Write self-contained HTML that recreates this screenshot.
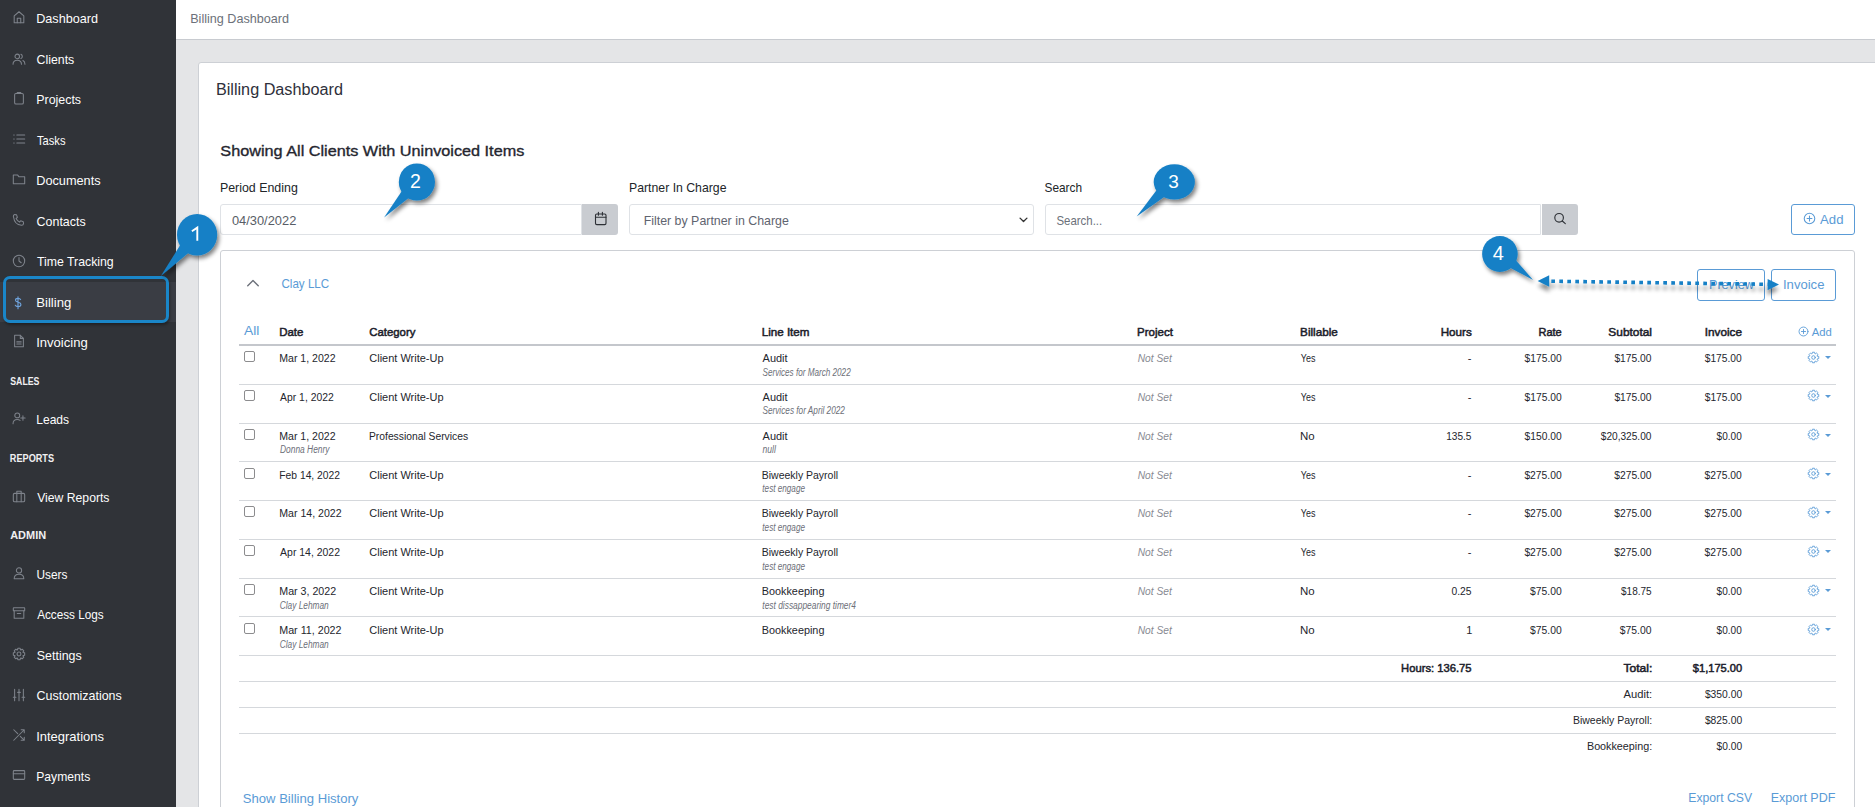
<!DOCTYPE html>
<html><head><meta charset="utf-8">
<style>
*{box-sizing:border-box;margin:0;padding:0}
html,body{width:1875px;height:807px;overflow:hidden;background:#e4e5e7;font-family:"Liberation Sans",sans-serif;position:relative}
.a{position:absolute}
svg text{font-family:"Liberation Sans",sans-serif}
</style></head><body>
<div class="a" style="left:0px;top:0px;width:176px;height:807px;background:#303338"></div>
<div class="a" style="left:0px;top:282px;width:176px;height:40px;background:#3a3d44"></div>
<div class="a" style="left:176px;top:0px;width:1699px;height:40px;background:#fff;border-bottom:1px solid #c8cbd0"></div>
<div class="a" style="left:198px;top:62px;width:1720px;height:800px;background:#fff;border:1px solid #cdd0d5;border-radius:3px"></div>
<div class="a" style="left:220px;top:204px;width:362px;height:31px;border:1px solid #dfe2e6;border-radius:3px 0 0 3px;background:#fff"></div>
<div class="a" style="left:582px;top:204px;width:36px;height:31px;background:#c9ccd1;border-radius:0 3px 3px 0"></div>
<div class="a" style="left:629px;top:204px;width:405px;height:31px;border:1px solid #dfe2e6;border-radius:3px;background:#fff"></div>
<div class="a" style="left:1045px;top:204px;width:496px;height:31px;border:1px solid #dfe2e6;border-radius:3px 0 0 3px;background:#fff"></div>
<div class="a" style="left:1542px;top:204px;width:36px;height:31px;background:#c9ccd1;border-radius:0 3px 3px 0"></div>
<div class="a" style="left:1791px;top:204px;width:64px;height:31px;border:1px solid #5a9bd6;border-radius:3px;background:#fff"></div>
<div class="a" style="left:220px;top:250px;width:1635px;height:620px;border:1px solid #cdd0d5;border-radius:3px"></div>
<div class="a" style="left:1697px;top:269px;width:68px;height:32px;border:1px solid #5a9bd6;border-radius:3px"></div>
<div class="a" style="left:1771px;top:269px;width:65px;height:32px;border:1px solid #5a9bd6;border-radius:3px"></div>
<div class="a" style="left:239px;top:344px;width:1597px;height:2px;background:#c4c7cc"></div>
<div class="a" style="left:239px;top:384px;width:1597px;height:1px;background:#d5d8dc"></div>
<div class="a" style="left:239px;top:423px;width:1597px;height:1px;background:#d5d8dc"></div>
<div class="a" style="left:239px;top:461px;width:1597px;height:1px;background:#d5d8dc"></div>
<div class="a" style="left:239px;top:500px;width:1597px;height:1px;background:#d5d8dc"></div>
<div class="a" style="left:239px;top:539px;width:1597px;height:1px;background:#d5d8dc"></div>
<div class="a" style="left:239px;top:578px;width:1597px;height:1px;background:#d5d8dc"></div>
<div class="a" style="left:239px;top:616px;width:1597px;height:1px;background:#d5d8dc"></div>
<div class="a" style="left:239px;top:655px;width:1597px;height:1px;background:#d5d8dc"></div>
<div class="a" style="left:239px;top:681px;width:1597px;height:1px;background:#d5d8dc"></div>
<div class="a" style="left:239px;top:707px;width:1597px;height:1px;background:#d5d8dc"></div>
<div class="a" style="left:239px;top:733px;width:1597px;height:1px;background:#d5d8dc"></div>
<div class="a" style="left:244px;top:351px;width:11px;height:11px;border:1px solid #8c8c8e;border-radius:2px;background:#fff"></div>
<div class="a" style="left:244px;top:390px;width:11px;height:11px;border:1px solid #8c8c8e;border-radius:2px;background:#fff"></div>
<div class="a" style="left:244px;top:429px;width:11px;height:11px;border:1px solid #8c8c8e;border-radius:2px;background:#fff"></div>
<div class="a" style="left:244px;top:468px;width:11px;height:11px;border:1px solid #8c8c8e;border-radius:2px;background:#fff"></div>
<div class="a" style="left:244px;top:506px;width:11px;height:11px;border:1px solid #8c8c8e;border-radius:2px;background:#fff"></div>
<div class="a" style="left:244px;top:545px;width:11px;height:11px;border:1px solid #8c8c8e;border-radius:2px;background:#fff"></div>
<div class="a" style="left:244px;top:584px;width:11px;height:11px;border:1px solid #8c8c8e;border-radius:2px;background:#fff"></div>
<div class="a" style="left:244px;top:623px;width:11px;height:11px;border:1px solid #8c8c8e;border-radius:2px;background:#fff"></div>
<svg class="a" style="left:12px;top:10px" width="14" height="14" viewBox="0 0 16 16" fill="none" stroke="#7e838b" stroke-width="1.2" stroke-linecap="round" stroke-linejoin="round"><path d="M2.5 14.5V6.8L8 2l5.5 4.8v7.7z"/><path d="M6 14.5V9.5h4v5"/></svg>
<svg class="a" style="left:12px;top:52px" width="14" height="14" viewBox="0 0 16 16" fill="none" stroke="#7e838b" stroke-width="1.2" stroke-linecap="round" stroke-linejoin="round"><circle cx="6" cy="5" r="2.6"/><path d="M1.2 14c0-2.8 2-4.6 4.8-4.6s4.8 1.8 4.8 4.6"/><path d="M10.2 2.6a2.6 2.6 0 0 1 0 4.8"/><path d="M12.5 9.8c1.4.6 2.3 2 2.3 4.2"/></svg>
<svg class="a" style="left:12px;top:91px" width="14" height="14" viewBox="0 0 16 16" fill="none" stroke="#7e838b" stroke-width="1.2" stroke-linecap="round" stroke-linejoin="round"><rect x="3" y="2.8" width="10" height="12" rx="1.5"/><path d="M6 2.8V1.8h4v1"/></svg>
<svg class="a" style="left:12px;top:132px" width="14" height="14" viewBox="0 0 16 16" fill="none" stroke="#7e838b" stroke-width="1.2" stroke-linecap="round" stroke-linejoin="round"><path d="M5.5 3.5h9M5.5 8h9M5.5 12.5h9"/><path d="M2 3.5h.5M2 8h.5M2 12.5h.5"/></svg>
<svg class="a" style="left:12px;top:172px" width="14" height="14" viewBox="0 0 16 16" fill="none" stroke="#7e838b" stroke-width="1.2" stroke-linecap="round" stroke-linejoin="round"><path d="M1.5 4V13.5h13V5.5H8L6.5 3.5h-5z"/></svg>
<svg class="a" style="left:12px;top:213px" width="14" height="14" viewBox="0 0 16 16" fill="none" stroke="#7e838b" stroke-width="1.2" stroke-linecap="round" stroke-linejoin="round"><path d="M3 1.8l2.2.3 1 3-1.5 1.2c.8 1.9 2.2 3.3 4 4.1l1.2-1.5 3 1 .3 2.2c-.2 1.2-1.2 2-2.4 1.9C5.6 13.5 2.5 10.4 1.9 5.2 1.1 3.1 1.9 2 3 1.8z"/></svg>
<svg class="a" style="left:12px;top:254px" width="14" height="14" viewBox="0 0 16 16" fill="none" stroke="#7e838b" stroke-width="1.2" stroke-linecap="round" stroke-linejoin="round"><circle cx="8" cy="8" r="6.5"/><path d="M8 4v4l2.5 2"/></svg>
<svg class="a" style="left:11px;top:294.5px" width="14" height="16" viewBox="0 0 14 16" fill="none" stroke="#6fa3dc" stroke-width="1.1" stroke-linecap="round"><path d="M9.6 4.6C9.2 3.8 8.3 3.4 7 3.4 5.5 3.4 4.5 4.1 4.5 5.2s.9 1.6 2.6 2 2.8 1 2.8 2.3-1.1 2.1-2.8 2.1c-1.3 0-2.4-.5-2.8-1.4M7 1.8v12"/></svg>
<svg class="a" style="left:12px;top:334px" width="14" height="14" viewBox="0 0 16 16" fill="none" stroke="#7e838b" stroke-width="1.2" stroke-linecap="round" stroke-linejoin="round"><path d="M3 1.5h6.5L13 5v9.5H3z"/><path d="M9.5 1.5V5H13"/><path d="M5.5 9h5M5.5 11.5h5"/></svg>
<svg class="a" style="left:12px;top:411px" width="14" height="14" viewBox="0 0 16 16" fill="none" stroke="#7e838b" stroke-width="1.2" stroke-linecap="round" stroke-linejoin="round"><circle cx="6" cy="5" r="2.8"/><path d="M1.2 14.5c0-3 2-4.8 4.8-4.8 1.3 0 2.4.4 3.2 1"/><path d="M12.5 5.5v5M10 8h5"/></svg>
<svg class="a" style="left:12px;top:489px" width="14" height="14" viewBox="0 0 16 16" fill="none" stroke="#7e838b" stroke-width="1.2" stroke-linecap="round" stroke-linejoin="round"><rect x="1.5" y="5" width="13" height="9.5" rx="1.5"/><path d="M5.5 5V2.5h5V5M5.5 5v9.5M10.5 5v9.5"/></svg>
<svg class="a" style="left:12px;top:566px" width="14" height="14" viewBox="0 0 16 16" fill="none" stroke="#7e838b" stroke-width="1.2" stroke-linecap="round" stroke-linejoin="round"><circle cx="8" cy="5" r="3"/><path d="M2.5 14.5c0-3 2.3-5 5.5-5s5.5 2 5.5 5z"/></svg>
<svg class="a" style="left:12px;top:606px" width="14" height="14" viewBox="0 0 16 16" fill="none" stroke="#7e838b" stroke-width="1.2" stroke-linecap="round" stroke-linejoin="round"><rect x="1.5" y="2" width="13" height="3.5" rx=".5"/><path d="M2.5 5.5v8.5h11V5.5"/><path d="M6 8.5h4"/></svg>
<svg class="a" style="left:12px;top:647px" width="14" height="14" viewBox="0 0 16 16" fill="none" stroke="#7e838b" stroke-width="1.2" stroke-linecap="round" stroke-linejoin="round"><path d="M12.71,6.33 L14.47,6.69 L14.47,9.31 L12.71,9.67 L12.51,10.15 L13.50,11.65 L11.65,13.50 L10.15,12.51 L9.67,12.71 L9.31,14.47 L6.69,14.47 L6.33,12.71 L5.85,12.51 L4.35,13.50 L2.50,11.65 L3.49,10.15 L3.29,9.67 L1.53,9.31 L1.53,6.69 L3.29,6.33 L3.49,5.85 L2.50,4.35 L4.35,2.50 L5.85,3.49 L6.33,3.29 L6.69,1.53 L9.31,1.53 L9.67,3.29 L10.15,3.49 L11.65,2.50 L13.50,4.35 L12.51,5.85Z"/><circle cx="8" cy="8" r="2.2"/></svg>
<svg class="a" style="left:12px;top:688px" width="14" height="14" viewBox="0 0 16 16" fill="none" stroke="#7e838b" stroke-width="1.2" stroke-linecap="round" stroke-linejoin="round"><path d="M3 1.5v13M8 1.5v13M13 1.5v13"/><path d="M1.5 10.5h3M6.5 5h3M11.5 10.5h3"/></svg>
<svg class="a" style="left:12px;top:728px" width="14" height="14" viewBox="0 0 16 16" fill="none" stroke="#7e838b" stroke-width="1.2" stroke-linecap="round" stroke-linejoin="round"><path d="M10.5 2H14v3.5M14 2L2 14M10.5 14H14v-3.5M14 14L9.5 9.5M2 2l4.5 4.5"/></svg>
<svg class="a" style="left:12px;top:768px" width="14" height="14" viewBox="0 0 16 16" fill="none" stroke="#7e838b" stroke-width="1.2" stroke-linecap="round" stroke-linejoin="round"><rect x="1.5" y="3" width="13" height="10" rx="1"/><path d="M1.5 6.5h13"/></svg>
<svg class="a" style="left:594px;top:211px" width="14" height="15" viewBox="0 0 14 15" fill="none" stroke="#2d3036" stroke-width="1.1" stroke-linecap="round" stroke-linejoin="round"><rect x="1.5" y="3" width="10.5" height="10.6" rx="1.3"/><path d="M1.5 6.3h10.5M4.4 1.3v3M8.4 1.3v3"/></svg>
<svg class="a" style="left:1018px;top:214px" width="11" height="11" viewBox="0 0 16 16" fill="none" stroke="#333" stroke-width="2" stroke-linecap="round" stroke-linejoin="round"><path d="M3 6l5 5 5-5"/></svg>
<svg class="a" style="left:1552px;top:211px" width="15" height="15" viewBox="0 0 15 15" fill="none" stroke="#2d3036" stroke-width="1.15" stroke-linecap="round" stroke-linejoin="round"><circle cx="7.1" cy="6.8" r="4.3"/><path d="M10.3 10l3 2.6"/></svg>
<svg class="a" style="left:1803px;top:212px" width="13" height="13" viewBox="0 0 16 16" fill="none" stroke="#5a9bd6" stroke-width="1.3" stroke-linecap="round" stroke-linejoin="round"><circle cx="8" cy="8" r="6.5"/><path d="M8 5v6M5 8h6"/></svg>
<svg class="a" style="left:246px;top:277px" width="14" height="14" viewBox="0 0 16 16" fill="none" stroke="#6c717a" stroke-width="1.6" stroke-linecap="round" stroke-linejoin="round"><path d="M2 10l6-6 6 6"/></svg>
<svg class="a" style="left:1797.6px;top:325.8px" width="11" height="11" viewBox="0 0 16 16" fill="none" stroke="#5a9bd6" stroke-width="1.3" stroke-linecap="round" stroke-linejoin="round"><circle cx="8" cy="8" r="6.5"/><path d="M8 5v6M5 8h6"/></svg>
<svg class="a" style="left:1807.4px;top:351.3px" width="13" height="13" viewBox="0 0 16 16" fill="none" stroke="#5a9bd6" stroke-width="1.1" stroke-linecap="round" stroke-linejoin="round"><path d="M12.71,6.33 L14.47,6.69 L14.47,9.31 L12.71,9.67 L12.51,10.15 L13.50,11.65 L11.65,13.50 L10.15,12.51 L9.67,12.71 L9.31,14.47 L6.69,14.47 L6.33,12.71 L5.85,12.51 L4.35,13.50 L2.50,11.65 L3.49,10.15 L3.29,9.67 L1.53,9.31 L1.53,6.69 L3.29,6.33 L3.49,5.85 L2.50,4.35 L4.35,2.50 L5.85,3.49 L6.33,3.29 L6.69,1.53 L9.31,1.53 L9.67,3.29 L10.15,3.49 L11.65,2.50 L13.50,4.35 L12.51,5.85Z"/><circle cx="8" cy="8" r="2.2"/></svg>
<div class="a" style="left:1825px;top:356px;width:0;height:0;border-left:3.4px solid transparent;border-right:3.4px solid transparent;border-top:3.2px solid #5a9bd6"></div>
<svg class="a" style="left:1807.4px;top:389.3px" width="13" height="13" viewBox="0 0 16 16" fill="none" stroke="#5a9bd6" stroke-width="1.1" stroke-linecap="round" stroke-linejoin="round"><path d="M12.71,6.33 L14.47,6.69 L14.47,9.31 L12.71,9.67 L12.51,10.15 L13.50,11.65 L11.65,13.50 L10.15,12.51 L9.67,12.71 L9.31,14.47 L6.69,14.47 L6.33,12.71 L5.85,12.51 L4.35,13.50 L2.50,11.65 L3.49,10.15 L3.29,9.67 L1.53,9.31 L1.53,6.69 L3.29,6.33 L3.49,5.85 L2.50,4.35 L4.35,2.50 L5.85,3.49 L6.33,3.29 L6.69,1.53 L9.31,1.53 L9.67,3.29 L10.15,3.49 L11.65,2.50 L13.50,4.35 L12.51,5.85Z"/><circle cx="8" cy="8" r="2.2"/></svg>
<div class="a" style="left:1825px;top:395px;width:0;height:0;border-left:3.4px solid transparent;border-right:3.4px solid transparent;border-top:3.2px solid #5a9bd6"></div>
<svg class="a" style="left:1807.4px;top:428.3px" width="13" height="13" viewBox="0 0 16 16" fill="none" stroke="#5a9bd6" stroke-width="1.1" stroke-linecap="round" stroke-linejoin="round"><path d="M12.71,6.33 L14.47,6.69 L14.47,9.31 L12.71,9.67 L12.51,10.15 L13.50,11.65 L11.65,13.50 L10.15,12.51 L9.67,12.71 L9.31,14.47 L6.69,14.47 L6.33,12.71 L5.85,12.51 L4.35,13.50 L2.50,11.65 L3.49,10.15 L3.29,9.67 L1.53,9.31 L1.53,6.69 L3.29,6.33 L3.49,5.85 L2.50,4.35 L4.35,2.50 L5.85,3.49 L6.33,3.29 L6.69,1.53 L9.31,1.53 L9.67,3.29 L10.15,3.49 L11.65,2.50 L13.50,4.35 L12.51,5.85Z"/><circle cx="8" cy="8" r="2.2"/></svg>
<div class="a" style="left:1825px;top:434px;width:0;height:0;border-left:3.4px solid transparent;border-right:3.4px solid transparent;border-top:3.2px solid #5a9bd6"></div>
<svg class="a" style="left:1807.4px;top:467.3px" width="13" height="13" viewBox="0 0 16 16" fill="none" stroke="#5a9bd6" stroke-width="1.1" stroke-linecap="round" stroke-linejoin="round"><path d="M12.71,6.33 L14.47,6.69 L14.47,9.31 L12.71,9.67 L12.51,10.15 L13.50,11.65 L11.65,13.50 L10.15,12.51 L9.67,12.71 L9.31,14.47 L6.69,14.47 L6.33,12.71 L5.85,12.51 L4.35,13.50 L2.50,11.65 L3.49,10.15 L3.29,9.67 L1.53,9.31 L1.53,6.69 L3.29,6.33 L3.49,5.85 L2.50,4.35 L4.35,2.50 L5.85,3.49 L6.33,3.29 L6.69,1.53 L9.31,1.53 L9.67,3.29 L10.15,3.49 L11.65,2.50 L13.50,4.35 L12.51,5.85Z"/><circle cx="8" cy="8" r="2.2"/></svg>
<div class="a" style="left:1825px;top:473px;width:0;height:0;border-left:3.4px solid transparent;border-right:3.4px solid transparent;border-top:3.2px solid #5a9bd6"></div>
<svg class="a" style="left:1807.4px;top:506.3px" width="13" height="13" viewBox="0 0 16 16" fill="none" stroke="#5a9bd6" stroke-width="1.1" stroke-linecap="round" stroke-linejoin="round"><path d="M12.71,6.33 L14.47,6.69 L14.47,9.31 L12.71,9.67 L12.51,10.15 L13.50,11.65 L11.65,13.50 L10.15,12.51 L9.67,12.71 L9.31,14.47 L6.69,14.47 L6.33,12.71 L5.85,12.51 L4.35,13.50 L2.50,11.65 L3.49,10.15 L3.29,9.67 L1.53,9.31 L1.53,6.69 L3.29,6.33 L3.49,5.85 L2.50,4.35 L4.35,2.50 L5.85,3.49 L6.33,3.29 L6.69,1.53 L9.31,1.53 L9.67,3.29 L10.15,3.49 L11.65,2.50 L13.50,4.35 L12.51,5.85Z"/><circle cx="8" cy="8" r="2.2"/></svg>
<div class="a" style="left:1825px;top:511px;width:0;height:0;border-left:3.4px solid transparent;border-right:3.4px solid transparent;border-top:3.2px solid #5a9bd6"></div>
<svg class="a" style="left:1807.4px;top:545.3px" width="13" height="13" viewBox="0 0 16 16" fill="none" stroke="#5a9bd6" stroke-width="1.1" stroke-linecap="round" stroke-linejoin="round"><path d="M12.71,6.33 L14.47,6.69 L14.47,9.31 L12.71,9.67 L12.51,10.15 L13.50,11.65 L11.65,13.50 L10.15,12.51 L9.67,12.71 L9.31,14.47 L6.69,14.47 L6.33,12.71 L5.85,12.51 L4.35,13.50 L2.50,11.65 L3.49,10.15 L3.29,9.67 L1.53,9.31 L1.53,6.69 L3.29,6.33 L3.49,5.85 L2.50,4.35 L4.35,2.50 L5.85,3.49 L6.33,3.29 L6.69,1.53 L9.31,1.53 L9.67,3.29 L10.15,3.49 L11.65,2.50 L13.50,4.35 L12.51,5.85Z"/><circle cx="8" cy="8" r="2.2"/></svg>
<div class="a" style="left:1825px;top:550px;width:0;height:0;border-left:3.4px solid transparent;border-right:3.4px solid transparent;border-top:3.2px solid #5a9bd6"></div>
<svg class="a" style="left:1807.4px;top:584.3px" width="13" height="13" viewBox="0 0 16 16" fill="none" stroke="#5a9bd6" stroke-width="1.1" stroke-linecap="round" stroke-linejoin="round"><path d="M12.71,6.33 L14.47,6.69 L14.47,9.31 L12.71,9.67 L12.51,10.15 L13.50,11.65 L11.65,13.50 L10.15,12.51 L9.67,12.71 L9.31,14.47 L6.69,14.47 L6.33,12.71 L5.85,12.51 L4.35,13.50 L2.50,11.65 L3.49,10.15 L3.29,9.67 L1.53,9.31 L1.53,6.69 L3.29,6.33 L3.49,5.85 L2.50,4.35 L4.35,2.50 L5.85,3.49 L6.33,3.29 L6.69,1.53 L9.31,1.53 L9.67,3.29 L10.15,3.49 L11.65,2.50 L13.50,4.35 L12.51,5.85Z"/><circle cx="8" cy="8" r="2.2"/></svg>
<div class="a" style="left:1825px;top:589px;width:0;height:0;border-left:3.4px solid transparent;border-right:3.4px solid transparent;border-top:3.2px solid #5a9bd6"></div>
<svg class="a" style="left:1807.4px;top:623.3px" width="13" height="13" viewBox="0 0 16 16" fill="none" stroke="#5a9bd6" stroke-width="1.1" stroke-linecap="round" stroke-linejoin="round"><path d="M12.71,6.33 L14.47,6.69 L14.47,9.31 L12.71,9.67 L12.51,10.15 L13.50,11.65 L11.65,13.50 L10.15,12.51 L9.67,12.71 L9.31,14.47 L6.69,14.47 L6.33,12.71 L5.85,12.51 L4.35,13.50 L2.50,11.65 L3.49,10.15 L3.29,9.67 L1.53,9.31 L1.53,6.69 L3.29,6.33 L3.49,5.85 L2.50,4.35 L4.35,2.50 L5.85,3.49 L6.33,3.29 L6.69,1.53 L9.31,1.53 L9.67,3.29 L10.15,3.49 L11.65,2.50 L13.50,4.35 L12.51,5.85Z"/><circle cx="8" cy="8" r="2.2"/></svg>
<div class="a" style="left:1825px;top:628px;width:0;height:0;border-left:3.4px solid transparent;border-right:3.4px solid transparent;border-top:3.2px solid #5a9bd6"></div>
<svg class="a" style="left:0;top:0" width="1875" height="807">
<text x="36.21" y="23.00" font-size="13" fill="#fdfdfd" textLength="61.90" lengthAdjust="spacingAndGlyphs">Dashboard</text>
<text x="36.62" y="64.00" font-size="13" fill="#fdfdfd" textLength="37.66" lengthAdjust="spacingAndGlyphs">Clients</text>
<text x="36.23" y="103.50" font-size="13" fill="#fdfdfd" textLength="44.86" lengthAdjust="spacingAndGlyphs">Projects</text>
<text x="37.03" y="145.00" font-size="13" fill="#fdfdfd" textLength="28.42" lengthAdjust="spacingAndGlyphs">Tasks</text>
<text x="36.21" y="184.50" font-size="13" fill="#fdfdfd" textLength="64.39" lengthAdjust="spacingAndGlyphs">Documents</text>
<text x="36.62" y="225.70" font-size="13" fill="#fdfdfd" textLength="49.07" lengthAdjust="spacingAndGlyphs">Contacts</text>
<text x="37.01" y="266.00" font-size="13" fill="#fdfdfd" textLength="76.68" lengthAdjust="spacingAndGlyphs">Time Tracking</text>
<text x="36.17" y="307.00" font-size="13" fill="#fdfdfd" textLength="35.17" lengthAdjust="spacingAndGlyphs">Billing</text>
<text x="36.18" y="346.80" font-size="13" fill="#fdfdfd" textLength="51.55" lengthAdjust="spacingAndGlyphs">Invoicing</text>
<text x="36.26" y="423.50" font-size="13" fill="#fdfdfd" textLength="32.82" lengthAdjust="spacingAndGlyphs">Leads</text>
<text x="37.20" y="501.60" font-size="13" fill="#fdfdfd" textLength="72.28" lengthAdjust="spacingAndGlyphs">View Reports</text>
<text x="36.46" y="578.90" font-size="13" fill="#fdfdfd" textLength="30.91" lengthAdjust="spacingAndGlyphs">Users</text>
<text x="37.20" y="619.00" font-size="13" fill="#fdfdfd" textLength="66.47" lengthAdjust="spacingAndGlyphs">Access Logs</text>
<text x="36.81" y="659.50" font-size="13" fill="#fdfdfd" textLength="44.88" lengthAdjust="spacingAndGlyphs">Settings</text>
<text x="36.62" y="700.00" font-size="13" fill="#fdfdfd" textLength="85.17" lengthAdjust="spacingAndGlyphs">Customizations</text>
<text x="36.19" y="740.80" font-size="13" fill="#fdfdfd" textLength="67.82" lengthAdjust="spacingAndGlyphs">Integrations</text>
<text x="36.25" y="781.00" font-size="13" fill="#fdfdfd" textLength="54.03" lengthAdjust="spacingAndGlyphs">Payments</text>
<text x="10.26" y="385.30" font-size="10" fill="#f0f0f2" textLength="29.17" lengthAdjust="spacingAndGlyphs" font-weight="bold">SALES</text>
<text x="9.83" y="462.20" font-size="10" fill="#f0f0f2" textLength="44.21" lengthAdjust="spacingAndGlyphs" font-weight="bold">REPORTS</text>
<text x="10.23" y="539.00" font-size="10" fill="#f0f0f2" textLength="35.89" lengthAdjust="spacingAndGlyphs" font-weight="bold">ADMIN</text>
<text x="190.22" y="22.70" font-size="13" fill="#6c717a" textLength="98.79" lengthAdjust="spacingAndGlyphs">Billing Dashboard</text>
<text x="215.93" y="95.00" font-size="16" fill="#2e303a" textLength="126.98" lengthAdjust="spacingAndGlyphs">Billing Dashboard</text>
<text x="220.39" y="155.80" font-size="15" fill="#25262f" textLength="303.91" lengthAdjust="spacingAndGlyphs" stroke="#25262f" stroke-width="0.35">Showing All Clients With Uninvoiced Items</text>
<text x="219.93" y="191.80" font-size="13" fill="#212529" textLength="77.86" lengthAdjust="spacingAndGlyphs">Period Ending</text>
<text x="629.04" y="192.00" font-size="13" fill="#212529" textLength="97.45" lengthAdjust="spacingAndGlyphs">Partner In Charge</text>
<text x="1044.53" y="192.00" font-size="13" fill="#212529" textLength="37.54" lengthAdjust="spacingAndGlyphs">Search</text>
<text x="231.90" y="224.80" font-size="12" fill="#585d66" textLength="64.42" lengthAdjust="spacingAndGlyphs">04/30/2022</text>
<text x="643.63" y="224.90" font-size="13" fill="#5f6470" textLength="145.27" lengthAdjust="spacingAndGlyphs">Filter by Partner in Charge</text>
<text x="1056.44" y="224.90" font-size="13" fill="#6c717a" textLength="45.79" lengthAdjust="spacingAndGlyphs">Search...</text>
<text x="1820.10" y="223.90" font-size="13" fill="#5a9bd6" textLength="23.34" lengthAdjust="spacingAndGlyphs">Add</text>
<text x="281.46" y="288.00" font-size="13" fill="#5a9bd6" textLength="47.75" lengthAdjust="spacingAndGlyphs">Clay LLC</text>
<text x="1709.02" y="289.00" font-size="13" fill="#5a9bd6" textLength="44.83" lengthAdjust="spacingAndGlyphs">Preview</text>
<text x="1782.98" y="289.00" font-size="13" fill="#5a9bd6" textLength="41.45" lengthAdjust="spacingAndGlyphs">Invoice</text>
<text x="244.00" y="334.80" font-size="13" fill="#5a9bd6" textLength="15.41" lengthAdjust="spacingAndGlyphs">All</text>
<text x="279.20" y="336.10" font-size="11" fill="#1c1d2b" textLength="24.26" lengthAdjust="spacingAndGlyphs" stroke="#1c1d2b" stroke-width="0.5">Date</text>
<text x="369.27" y="336.10" font-size="11" fill="#1c1d2b" textLength="46.13" lengthAdjust="spacingAndGlyphs" stroke="#1c1d2b" stroke-width="0.5">Category</text>
<text x="761.69" y="336.10" font-size="11" fill="#1c1d2b" textLength="47.81" lengthAdjust="spacingAndGlyphs" stroke="#1c1d2b" stroke-width="0.5">Line Item</text>
<text x="1137.00" y="336.10" font-size="11" fill="#1c1d2b" textLength="35.86" lengthAdjust="spacingAndGlyphs" stroke="#1c1d2b" stroke-width="0.5">Project</text>
<text x="1300.08" y="336.10" font-size="11" fill="#1c1d2b" textLength="37.79" lengthAdjust="spacingAndGlyphs" stroke="#1c1d2b" stroke-width="0.5">Billable</text>
<text x="1440.69" y="336.10" font-size="11" fill="#1c1d2b" textLength="31.07" lengthAdjust="spacingAndGlyphs" stroke="#1c1d2b" stroke-width="0.5">Hours</text>
<text x="1538.44" y="336.10" font-size="11" fill="#1c1d2b" textLength="23.31" lengthAdjust="spacingAndGlyphs" stroke="#1c1d2b" stroke-width="0.5">Rate</text>
<text x="1608.33" y="336.10" font-size="11" fill="#1c1d2b" textLength="43.66" lengthAdjust="spacingAndGlyphs" stroke="#1c1d2b" stroke-width="0.5">Subtotal</text>
<text x="1704.78" y="336.10" font-size="11" fill="#1c1d2b" textLength="37.19" lengthAdjust="spacingAndGlyphs" stroke="#1c1d2b" stroke-width="0.5">Invoice</text>
<text x="1811.70" y="336.10" font-size="11" fill="#5a9bd6" textLength="20.14" lengthAdjust="spacingAndGlyphs">Add</text>
<text x="279.28" y="362.00" font-size="11" fill="#24262d" textLength="56.25" lengthAdjust="spacingAndGlyphs">Mar 1, 2022</text>
<text x="369.29" y="362.00" font-size="11" fill="#24262d" textLength="74.26" lengthAdjust="spacingAndGlyphs">Client Write-Up</text>
<text x="762.60" y="362.00" font-size="11" fill="#24262d" textLength="24.96" lengthAdjust="spacingAndGlyphs">Audit</text>
<text x="762.47" y="375.60" font-size="10" fill="#6d7079" textLength="88.20" lengthAdjust="spacingAndGlyphs" font-style="italic">Services for March 2022</text>
<text x="1137.74" y="362.00" font-size="11" fill="#878a92" textLength="34.01" lengthAdjust="spacingAndGlyphs" font-style="italic">Not Set</text>
<text x="1300.86" y="362.00" font-size="11" fill="#24262d" textLength="14.62" lengthAdjust="spacingAndGlyphs">Yes</text>
<text x="1467.66" y="362.00" font-size="11" fill="#24262d">-</text>
<text x="1524.60" y="362.00" font-size="11" fill="#24262d" textLength="37.06" lengthAdjust="spacingAndGlyphs">$175.00</text>
<text x="1614.40" y="362.00" font-size="11" fill="#24262d" textLength="37.06" lengthAdjust="spacingAndGlyphs">$175.00</text>
<text x="1704.70" y="362.00" font-size="11" fill="#24262d" textLength="37.06" lengthAdjust="spacingAndGlyphs">$175.00</text>
<text x="280.10" y="400.86" font-size="11" fill="#24262d" textLength="53.62" lengthAdjust="spacingAndGlyphs">Apr 1, 2022</text>
<text x="369.29" y="400.86" font-size="11" fill="#24262d" textLength="74.26" lengthAdjust="spacingAndGlyphs">Client Write-Up</text>
<text x="762.60" y="400.86" font-size="11" fill="#24262d" textLength="24.96" lengthAdjust="spacingAndGlyphs">Audit</text>
<text x="762.47" y="414.46" font-size="10" fill="#6d7079" textLength="82.40" lengthAdjust="spacingAndGlyphs" font-style="italic">Services for April 2022</text>
<text x="1137.74" y="400.86" font-size="11" fill="#878a92" textLength="34.01" lengthAdjust="spacingAndGlyphs" font-style="italic">Not Set</text>
<text x="1300.86" y="400.86" font-size="11" fill="#24262d" textLength="14.62" lengthAdjust="spacingAndGlyphs">Yes</text>
<text x="1467.66" y="400.86" font-size="11" fill="#24262d">-</text>
<text x="1524.60" y="400.86" font-size="11" fill="#24262d" textLength="37.06" lengthAdjust="spacingAndGlyphs">$175.00</text>
<text x="1614.40" y="400.86" font-size="11" fill="#24262d" textLength="37.06" lengthAdjust="spacingAndGlyphs">$175.00</text>
<text x="1704.70" y="400.86" font-size="11" fill="#24262d" textLength="37.06" lengthAdjust="spacingAndGlyphs">$175.00</text>
<text x="279.28" y="439.72" font-size="11" fill="#24262d" textLength="56.25" lengthAdjust="spacingAndGlyphs">Mar 1, 2022</text>
<text x="279.97" y="453.32" font-size="10" fill="#6d7079" textLength="49.51" lengthAdjust="spacingAndGlyphs" font-style="italic">Donna Henry</text>
<text x="368.99" y="439.72" font-size="11" fill="#24262d" textLength="99.13" lengthAdjust="spacingAndGlyphs">Professional Services</text>
<text x="762.60" y="439.72" font-size="11" fill="#24262d" textLength="24.96" lengthAdjust="spacingAndGlyphs">Audit</text>
<text x="762.47" y="453.32" font-size="10" fill="#6d7079" textLength="13.39" lengthAdjust="spacingAndGlyphs" font-style="italic">null</text>
<text x="1137.74" y="439.72" font-size="11" fill="#878a92" textLength="34.01" lengthAdjust="spacingAndGlyphs" font-style="italic">Not Set</text>
<text x="1300.10" y="439.72" font-size="11" fill="#24262d" textLength="14.66" lengthAdjust="spacingAndGlyphs">No</text>
<text x="1446.17" y="439.72" font-size="11" fill="#24262d" textLength="25.34" lengthAdjust="spacingAndGlyphs">135.5</text>
<text x="1524.60" y="439.72" font-size="11" fill="#24262d" textLength="37.06" lengthAdjust="spacingAndGlyphs">$150.00</text>
<text x="1600.80" y="439.72" font-size="11" fill="#24262d" textLength="50.65" lengthAdjust="spacingAndGlyphs">$20,325.00</text>
<text x="1716.60" y="439.72" font-size="11" fill="#24262d" textLength="25.15" lengthAdjust="spacingAndGlyphs">$0.00</text>
<text x="279.30" y="478.58" font-size="11" fill="#24262d" textLength="60.72" lengthAdjust="spacingAndGlyphs">Feb 14, 2022</text>
<text x="369.29" y="478.58" font-size="11" fill="#24262d" textLength="74.26" lengthAdjust="spacingAndGlyphs">Client Write-Up</text>
<text x="761.78" y="478.58" font-size="11" fill="#24262d" textLength="76.31" lengthAdjust="spacingAndGlyphs">Biweekly Payroll</text>
<text x="762.34" y="492.18" font-size="10" fill="#6d7079" textLength="42.66" lengthAdjust="spacingAndGlyphs" font-style="italic">test engage</text>
<text x="1137.74" y="478.58" font-size="11" fill="#878a92" textLength="34.01" lengthAdjust="spacingAndGlyphs" font-style="italic">Not Set</text>
<text x="1300.86" y="478.58" font-size="11" fill="#24262d" textLength="14.62" lengthAdjust="spacingAndGlyphs">Yes</text>
<text x="1467.66" y="478.58" font-size="11" fill="#24262d">-</text>
<text x="1524.40" y="478.58" font-size="11" fill="#24262d" textLength="37.26" lengthAdjust="spacingAndGlyphs">$275.00</text>
<text x="1614.20" y="478.58" font-size="11" fill="#24262d" textLength="37.26" lengthAdjust="spacingAndGlyphs">$275.00</text>
<text x="1704.50" y="478.58" font-size="11" fill="#24262d" textLength="37.26" lengthAdjust="spacingAndGlyphs">$275.00</text>
<text x="279.27" y="517.44" font-size="11" fill="#24262d" textLength="62.25" lengthAdjust="spacingAndGlyphs">Mar 14, 2022</text>
<text x="369.29" y="517.44" font-size="11" fill="#24262d" textLength="74.26" lengthAdjust="spacingAndGlyphs">Client Write-Up</text>
<text x="761.78" y="517.44" font-size="11" fill="#24262d" textLength="76.31" lengthAdjust="spacingAndGlyphs">Biweekly Payroll</text>
<text x="762.34" y="531.04" font-size="10" fill="#6d7079" textLength="42.66" lengthAdjust="spacingAndGlyphs" font-style="italic">test engage</text>
<text x="1137.74" y="517.44" font-size="11" fill="#878a92" textLength="34.01" lengthAdjust="spacingAndGlyphs" font-style="italic">Not Set</text>
<text x="1300.86" y="517.44" font-size="11" fill="#24262d" textLength="14.62" lengthAdjust="spacingAndGlyphs">Yes</text>
<text x="1467.66" y="517.44" font-size="11" fill="#24262d">-</text>
<text x="1524.40" y="517.44" font-size="11" fill="#24262d" textLength="37.26" lengthAdjust="spacingAndGlyphs">$275.00</text>
<text x="1614.20" y="517.44" font-size="11" fill="#24262d" textLength="37.26" lengthAdjust="spacingAndGlyphs">$275.00</text>
<text x="1704.50" y="517.44" font-size="11" fill="#24262d" textLength="37.26" lengthAdjust="spacingAndGlyphs">$275.00</text>
<text x="280.10" y="556.30" font-size="11" fill="#24262d" textLength="59.92" lengthAdjust="spacingAndGlyphs">Apr 14, 2022</text>
<text x="369.29" y="556.30" font-size="11" fill="#24262d" textLength="74.26" lengthAdjust="spacingAndGlyphs">Client Write-Up</text>
<text x="761.78" y="556.30" font-size="11" fill="#24262d" textLength="76.31" lengthAdjust="spacingAndGlyphs">Biweekly Payroll</text>
<text x="762.34" y="569.90" font-size="10" fill="#6d7079" textLength="42.66" lengthAdjust="spacingAndGlyphs" font-style="italic">test engage</text>
<text x="1137.74" y="556.30" font-size="11" fill="#878a92" textLength="34.01" lengthAdjust="spacingAndGlyphs" font-style="italic">Not Set</text>
<text x="1300.86" y="556.30" font-size="11" fill="#24262d" textLength="14.62" lengthAdjust="spacingAndGlyphs">Yes</text>
<text x="1467.66" y="556.30" font-size="11" fill="#24262d">-</text>
<text x="1524.40" y="556.30" font-size="11" fill="#24262d" textLength="37.26" lengthAdjust="spacingAndGlyphs">$275.00</text>
<text x="1614.20" y="556.30" font-size="11" fill="#24262d" textLength="37.26" lengthAdjust="spacingAndGlyphs">$275.00</text>
<text x="1704.50" y="556.30" font-size="11" fill="#24262d" textLength="37.26" lengthAdjust="spacingAndGlyphs">$275.00</text>
<text x="279.27" y="595.16" font-size="11" fill="#24262d" textLength="56.86" lengthAdjust="spacingAndGlyphs">Mar 3, 2022</text>
<text x="279.71" y="608.76" font-size="10" fill="#6d7079" textLength="49.03" lengthAdjust="spacingAndGlyphs" font-style="italic">Clay Lehman</text>
<text x="369.29" y="595.16" font-size="11" fill="#24262d" textLength="74.26" lengthAdjust="spacingAndGlyphs">Client Write-Up</text>
<text x="761.75" y="595.16" font-size="11" fill="#24262d" textLength="62.66" lengthAdjust="spacingAndGlyphs">Bookkeeping</text>
<text x="762.34" y="608.76" font-size="10" fill="#6d7079" textLength="93.67" lengthAdjust="spacingAndGlyphs" font-style="italic">test dissappearing timer4</text>
<text x="1137.74" y="595.16" font-size="11" fill="#878a92" textLength="34.01" lengthAdjust="spacingAndGlyphs" font-style="italic">Not Set</text>
<text x="1300.10" y="595.16" font-size="11" fill="#24262d" textLength="14.66" lengthAdjust="spacingAndGlyphs">No</text>
<text x="1451.48" y="595.16" font-size="11" fill="#24262d" textLength="20.04" lengthAdjust="spacingAndGlyphs">0.25</text>
<text x="1530.00" y="595.16" font-size="11" fill="#24262d" textLength="31.66" lengthAdjust="spacingAndGlyphs">$75.00</text>
<text x="1621.00" y="595.16" font-size="11" fill="#24262d" textLength="30.61" lengthAdjust="spacingAndGlyphs">$18.75</text>
<text x="1716.60" y="595.16" font-size="11" fill="#24262d" textLength="25.15" lengthAdjust="spacingAndGlyphs">$0.00</text>
<text x="279.26" y="634.02" font-size="11" fill="#24262d" textLength="62.27" lengthAdjust="spacingAndGlyphs">Mar 11, 2022</text>
<text x="279.71" y="647.62" font-size="10" fill="#6d7079" textLength="49.03" lengthAdjust="spacingAndGlyphs" font-style="italic">Clay Lehman</text>
<text x="369.29" y="634.02" font-size="11" fill="#24262d" textLength="74.26" lengthAdjust="spacingAndGlyphs">Client Write-Up</text>
<text x="761.75" y="634.02" font-size="11" fill="#24262d" textLength="62.66" lengthAdjust="spacingAndGlyphs">Bookkeeping</text>
<text x="1137.74" y="634.02" font-size="11" fill="#878a92" textLength="34.01" lengthAdjust="spacingAndGlyphs" font-style="italic">Not Set</text>
<text x="1300.10" y="634.02" font-size="11" fill="#24262d" textLength="14.66" lengthAdjust="spacingAndGlyphs">No</text>
<text x="1466.31" y="634.02" font-size="11" fill="#24262d">1</text>
<text x="1530.00" y="634.02" font-size="11" fill="#24262d" textLength="31.66" lengthAdjust="spacingAndGlyphs">$75.00</text>
<text x="1619.80" y="634.02" font-size="11" fill="#24262d" textLength="31.66" lengthAdjust="spacingAndGlyphs">$75.00</text>
<text x="1716.60" y="634.02" font-size="11" fill="#24262d" textLength="25.15" lengthAdjust="spacingAndGlyphs">$0.00</text>
<text x="1401.13" y="672.30" font-size="11" fill="#1c1d2b" textLength="70.33" lengthAdjust="spacingAndGlyphs" stroke="#1c1d2b" stroke-width="0.5">Hours: 136.75</text>
<text x="1623.41" y="672.30" font-size="11" fill="#1c1d2b" textLength="28.88" lengthAdjust="spacingAndGlyphs" stroke="#1c1d2b" stroke-width="0.5">Total:</text>
<text x="1692.80" y="672.30" font-size="11" fill="#1c1d2b" textLength="49.38" lengthAdjust="spacingAndGlyphs" stroke="#1c1d2b" stroke-width="0.5">$1,175.00</text>
<text x="1623.60" y="698.20" font-size="11" fill="#24262d" textLength="28.61" lengthAdjust="spacingAndGlyphs">Audit:</text>
<text x="1704.90" y="698.20" font-size="11" fill="#24262d" textLength="37.26" lengthAdjust="spacingAndGlyphs">$350.00</text>
<text x="1572.98" y="724.40" font-size="11" fill="#24262d" textLength="79.16" lengthAdjust="spacingAndGlyphs">Biweekly Payroll:</text>
<text x="1704.90" y="724.40" font-size="11" fill="#24262d" textLength="37.26" lengthAdjust="spacingAndGlyphs">$825.00</text>
<text x="1586.96" y="749.70" font-size="11" fill="#24262d" textLength="65.21" lengthAdjust="spacingAndGlyphs">Bookkeeping:</text>
<text x="1716.60" y="749.70" font-size="11" fill="#24262d" textLength="25.55" lengthAdjust="spacingAndGlyphs">$0.00</text>
<text x="242.79" y="803.20" font-size="13" fill="#5a9bd6" textLength="115.61" lengthAdjust="spacingAndGlyphs">Show Billing History</text>
<text x="1688.25" y="802.30" font-size="13" fill="#5a9bd6" textLength="63.79" lengthAdjust="spacingAndGlyphs">Export CSV</text>
<text x="1770.72" y="802.30" font-size="13" fill="#5a9bd6" textLength="64.69" lengthAdjust="spacingAndGlyphs">Export PDF</text>
</svg>
<div class="a" style="left:3px;top:276px;width:166px;height:47px;border:3px solid #1a86c8;border-radius:7px;box-shadow:1px 2px 3px rgba(0,0,0,.35)"></div>
<svg class="a" style="left:148px;top:201px" width="85" height="90"><defs><filter id="sh1" x="-50%" y="-50%" width="200%" height="200%"><feGaussianBlur in="SourceAlpha" stdDeviation="2.2"/><feOffset dx="2" dy="3"/><feComponentTransfer><feFuncA type="linear" slope="0.5"/></feComponentTransfer><feMerge><feMergeNode/><feMergeNode in="SourceGraphic"/></feMerge></filter></defs><g filter="url(#sh1)" fill="#1780c6"><ellipse cx="49.099999999999994" cy="33.69999999999999" rx="20.1" ry="20.8"/><path d="M32.9,42.9 L12.9,74.9 L41.2,51.3 Z"/></g><g transform="translate(-148,-201)"><path d="M191.9 231.2 L197.3 227.6 V240.7" fill="none" stroke="#fff" stroke-width="1.9" stroke-linejoin="miter"/></g></svg>
<svg class="a" style="left:372px;top:151px" width="79" height="82"><defs><filter id="sh2" x="-50%" y="-50%" width="200%" height="200%"><feGaussianBlur in="SourceAlpha" stdDeviation="2.2"/><feOffset dx="2" dy="3"/><feComponentTransfer><feFuncA type="linear" slope="0.5"/></feComponentTransfer><feMerge><feMergeNode/><feMergeNode in="SourceGraphic"/></feMerge></filter></defs><g filter="url(#sh2)" fill="#1780c6"><ellipse cx="44.89999999999998" cy="31" rx="18.1" ry="18.6"/><path d="M31.2,38.1 L12.1,66.5 L38.2,45.8 Z"/></g><g transform="translate(-372,-151)"><text x="415.45" y="188" text-anchor="middle" font-size="19.5" fill="#fff">2</text></g></svg>
<svg class="a" style="left:1124px;top:152px" width="86" height="80"><defs><filter id="sh3" x="-50%" y="-50%" width="200%" height="200%"><feGaussianBlur in="SourceAlpha" stdDeviation="2.2"/><feOffset dx="2" dy="3"/><feComponentTransfer><feFuncA type="linear" slope="0.5"/></feComponentTransfer><feMerge><feMergeNode/><feMergeNode in="SourceGraphic"/></feMerge></filter></defs><g filter="url(#sh3)" fill="#1780c6"><ellipse cx="50.299999999999955" cy="29.900000000000006" rx="20.6" ry="17.7"/><path d="M34.0,36.3 L12.7,64.5 L41.5,44.0 Z"/></g><g transform="translate(-1124,-152)"><text x="1173.45" y="187.7" text-anchor="middle" font-size="19" fill="#fff">3</text></g></svg>
<svg class="a" style="left:1470px;top:224px" width="79" height="71"><defs><filter id="sh4" x="-50%" y="-50%" width="200%" height="200%"><feGaussianBlur in="SourceAlpha" stdDeviation="2.2"/><feOffset dx="2" dy="3"/><feComponentTransfer><feFuncA type="linear" slope="0.5"/></feComponentTransfer><feMerge><feMergeNode/><feMergeNode in="SourceGraphic"/></feMerge></filter></defs><g filter="url(#sh4)" fill="#1780c6"><ellipse cx="29.90000000000009" cy="30" rx="17.8" ry="17.9"/><path d="M38.6,42.9 L63.1,55.9 L45.2,35.5 Z"/></g><g transform="translate(-1470,-224)"><text x="1498.2" y="260" text-anchor="middle" font-size="20" fill="#fff">4</text></g></svg>
<svg class="a" style="left:1530px;top:268px" width="270" height="36"><defs><filter id="sha" x="-10%" y="-100%" width="120%" height="300%"><feGaussianBlur in="SourceAlpha" stdDeviation="2"/><feOffset dx="0" dy="5"/><feComponentTransfer><feFuncA type="linear" slope="0.45"/></feComponentTransfer><feMerge><feMergeNode/><feMergeNode in="SourceGraphic"/></feMerge></filter></defs><g filter="url(#sha)" fill="#1780c6"><path d="M21.3 13.2 L237.6 16.3" stroke="#1780c6" stroke-width="3.6" stroke-dasharray="3.7 4.3"/><path d="M7.6 13 L19.2 7.3 L19.2 18.8 Z"/><path d="M249 16.5 L237.6 11 L237.6 22.2 Z"/></g></svg>
</body></html>
